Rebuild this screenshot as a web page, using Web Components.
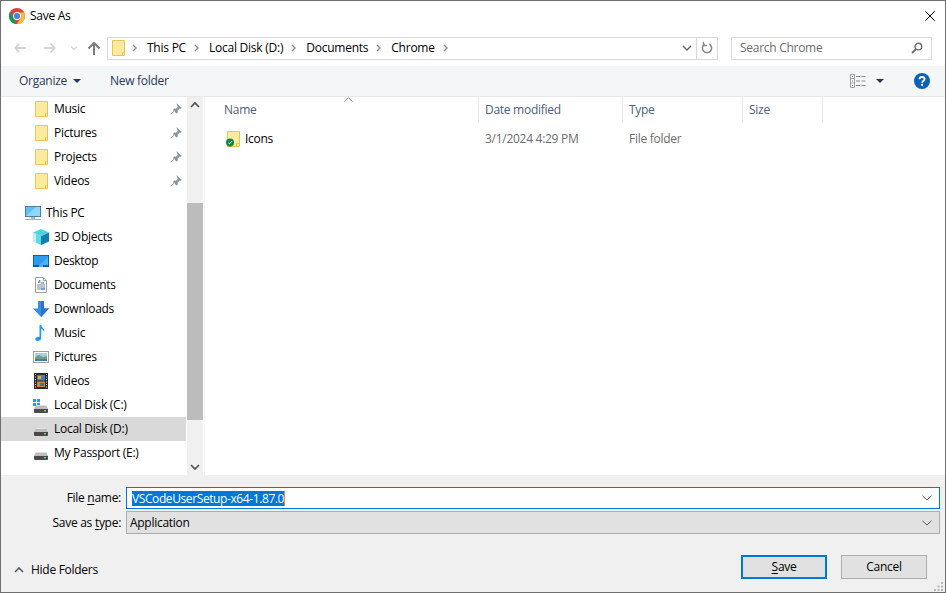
<!DOCTYPE html>
<html lang="en">
<head>
<meta charset="utf-8">
<title>Save As</title>
<style>
  html, body { margin: 0; padding: 0; background: #fff; }
  body { font: 12px/16px "Open Sans", "Noto Sans", sans-serif; letter-spacing: -0.28px; color: #000; overflow: hidden; }
</style>
</head>
<body>
<save-dialog></save-dialog>

<script>
"use strict";

const DISK = `<path d="M3 7h10l2 4H1z" fill="#bdbdbd"/><path d="M3 7h10l.5 1h-11z" fill="#e2e2e2"/><path d="M1 11h14v3.500l-1 .5H2l-1-.5z" fill="#4a4a4a"/><rect x="11" y="12" width="2" height="1.500" fill="#5fd35f"/>`;

const ICONS = {
  chrome: `<svg viewBox="0 0 16 16" width="16" height="16"><circle cx="8" cy="8" r="8" fill="#db4437"/><path d="M8 16A8 8 0 0 1 1 4l3.600 6.200L8 16z" fill="#0f9d58"/><path d="M16 8a8 8 0 0 1-8 8l3.800-6.500L8 4.500h7A8 8 0 0 1 16 8z" fill="#fbc02d"/><circle cx="8" cy="8" r="3.900" fill="#fff"/><circle cx="8" cy="8" r="3" fill="#3f82ee"/></svg>`,
  close: `<svg viewBox="0 0 10 10" width="10" height="10"><path d="M.3.3l9.400 9.400M9.700.3L.3 9.700" stroke="#000" stroke-width="1" fill="none"/></svg>`,
  back: `<svg viewBox="0 0 12 12" width="12" height="12"><path d="M5.500 1.500L1.200 6l4.300 4.500M1.500 6H12" stroke="#d4d4d4" stroke-width="1.800" fill="none"/></svg>`,
  forward: `<svg viewBox="0 0 12 12" width="12" height="12"><path d="M6.500 1.500L10.800 6l-4.300 4.500M10.500 6H0" stroke="#d4d4d4" stroke-width="1.800" fill="none"/></svg>`,
  recent: `<svg viewBox="0 0 8 6" width="8" height="6"><path d="M1 1.500l3 3 3-3" stroke="#d4d4d4" stroke-width="1.300" fill="none"/></svg>`,
  up: `<svg viewBox="0 0 14 14" width="14" height="14"><path d="M1.500 7.500L7 2l5.500 5.500M7 2.500V14" stroke="#7b7b7b" stroke-width="2" fill="none"/></svg>`,
  crumb: `<svg viewBox="0 0 6 8" width="6" height="8"><path d="M1 1l3 3-3 3" stroke="#8a8a8a" stroke-width="1.400" fill="none"/></svg>`,
  chevron: `<svg viewBox="0 0 10 6" width="10" height="6"><path d="M1 1l4 4 4-4" stroke="#6d6d6d" stroke-width="1.500" fill="none"/></svg>`,
  thin: `<svg viewBox="0 0 10 6" width="10" height="6"><path d="M.5.8L5 5l4.500-4.200" stroke="#5a5a5a" stroke-width="1" fill="none"/></svg>`,
  refresh: `<svg viewBox="0 0 12 14" width="12" height="14"><path d="M3.600 3.200A4.600 4.600 0 1 0 8.400 3.200" stroke="#8a8a8a" stroke-width="1.500" fill="none"/><path d="M2.400.8v3.800h3.800" stroke="#8a8a8a" stroke-width="1.300" fill="none"/></svg>`,
  search: `<svg viewBox="0 0 12 12" width="12" height="12"><circle cx="7.400" cy="4.600" r="3.300" stroke="#6d6d6d" stroke-width="1.400" fill="none"/><path d="M5 7L1 11" stroke="#6d6d6d" stroke-width="1.800"/></svg>`,
  caret: `<svg viewBox="0 0 8 4" width="8" height="4"><path d="M0 0h8L4 4z" fill="#1e395b"/></svg>`,
  views: `<svg viewBox="0 0 16 14" width="16" height="14"><path d="M.5.5h4v13h-4zM.5 4.500h4M.5 9h4" stroke="#a0a0a0" fill="#fff"/><path d="M6 2.500h4M11.500 2.500h4M6 7h4M11.500 7h4M6 11.500h4M11.500 11.500h4" stroke="#8c8c8c" fill="none"/><path d="M2 2.500h1M2 7h1M2 11.500h1" stroke="#777"/></svg>`,
  help: `<svg viewBox="0 0 16 16" width="16" height="16"><circle cx="8" cy="8" r="8" fill="#0a62b8"/><path d="M5.500 6.200C5.500 4.700 6.600 4 8 4s2.600.8 2.600 2.100c0 1.900-2.500 1.800-2.500 3.700" stroke="#fff" stroke-width="1.800" fill="none"/><rect x="7.100" y="10.800" width="2" height="2" fill="#fff"/></svg>`,
  pin: `<svg viewBox="0 0 12 12" width="12" height="12"><path d="M7 .8l4.200 4.200-1 .8-.7-.3-2 2 .1 1.800-.9.900L3.300 6.800l.9-.9 1.800.1 2-2-.3-.7zM4.300 7.700L.8 11.200" fill="#8d979f" stroke="#8d979f" stroke-width=".7"/></svg>`,
  sbUp: `<svg viewBox="0 0 10 6" width="10" height="6"><path d="M1 5l4-4 4 4" stroke="#505050" stroke-width="1.700" fill="none"/></svg>`,
  sbDown: `<svg viewBox="0 0 10 6" width="10" height="6"><path d="M1 1l4 4 4-4" stroke="#505050" stroke-width="1.700" fill="none"/></svg>`,
  hide: `<svg viewBox="0 0 10 6" width="10" height="6"><path d="M1 5l4-4 4 4" stroke="#555" stroke-width="1.500" fill="none"/></svg>`,
  sort: `<svg viewBox="0 0 9 5" width="9" height="5"><path d="M.5 4.500L4.500.7l4 3.800" stroke="#8a8a8a" fill="none"/></svg>`,
  grip: `<svg viewBox="0 0 10 9" width="10" height="9"><path d="M7 0h2v2H7zM3.500 3.500h2v2h-2zM7 3.500h2v2H7zM0 7h2v2H0zM3.500 7h2v2h-2zM7 7h2v2H7z" fill="#b8b8b8"/></svg>`,
  folder: `<svg viewBox="0 0 16 16" width="16" height="16"><path d="M2.500.5h12v15h-12z" fill="#fde99f" stroke="#e8c64f"/><path d="M12.500 15.500v-3h2" fill="none" stroke="#e8c64f"/></svg>`,
  sync: `<svg viewBox="0 0 16 16" width="16" height="16"><path d="M2.500.5h12v15h-12z" fill="#fde99f" stroke="#e8c64f"/><path d="M11.500 15.500v-3h3" fill="none" stroke="#e8c64f"/><circle cx="5" cy="11.500" r="4" fill="#14844a"/><path d="M3.300 11.700l1.300 1.200 2.100-2.600" stroke="#fff" stroke-width="1" fill="none"/></svg>`,
  pc: `<svg viewBox="0 0 16 16" width="16" height="16"><rect x=".5" y="1.500" width="15" height="10" fill="#5cc1f7" stroke="#4f7da3"/><path d="M1 11L11 2h4v9z" fill="#8fd6fb"/><path d="M6 12h4v2H6z" fill="#b0b8bf"/><path d="M0 14.500h16" stroke="#a9b1b8"/></svg>`,
  cube: `<svg viewBox="0 0 16 16" width="16" height="16"><path d="M8 0l8 3.500-8 3.700L0 3.500z" fill="#4fd3e0"/><path d="M0 3.500l8 3.700V16L0 12.500z" fill="#5fdbe8"/><path d="M0 3.500l3 1.400V14l-3-1.500z" fill="#c4f0f4"/><path d="M8 7.200l8-3.700v9L8 16z" fill="#0f7fb0"/></svg>`,
  desktop: `<svg viewBox="0 0 16 16" width="16" height="16"><rect x="0" y="2" width="16" height="12" fill="#0a5fb8"/><rect x="1" y="3" width="14" height="9" fill="#2d9cf0"/><path d="M7 12L15 4v8z" fill="#4fb2f5"/><rect x="6" y="12.500" width="4" height="1" fill="#cfe6fa"/></svg>`,
  documents: `<svg viewBox="0 0 16 16" width="16" height="16"><path d="M2.500.5h8l3 3v12h-11z" fill="#fff" stroke="#9aa0a6"/><path d="M10.500.5v3h3" fill="#e8e8e8" stroke="#9aa0a6"/><path d="M4 8h8M4 10h8M4 12h8" stroke="#7b8794"/><path d="M7 3l-1.500 3M5.500 5h2M8 6h3M8 12h4" stroke="#2a7fd0"/></svg>`,
  downloads: `<svg viewBox="0 0 16 16" width="16" height="16"><path d="M5 0h6v7.500h5L8 16 0 7.500h5z" fill="#3b8de0"/><path d="M8 0h3v7.500h5L8 16z" fill="#2a74c8"/></svg>`,
  music: `<svg viewBox="0 0 16 16" width="16" height="16"><path d="M6.500 0h1.700c.3 2.500 3.800 3.500 3 7-.6-2-2.200-3-3-3v9c0 1.700-1.700 3-3.700 3S2 15 2.500 13.500 5 11.200 6.500 12z" fill="#1a9cf0"/></svg>`,
  pictures: `<svg viewBox="0 0 16 16" width="16" height="16"><rect x=".5" y="2.500" width="15" height="11" fill="#fff" stroke="#a0a0a0"/><rect x="2" y="4" width="12" height="8" fill="#a9cfea"/><path d="M2 8l4-2 4 2 4-1v3H2z" fill="#6f9f8a"/><path d="M2 10h12v2H2z" fill="#3f7fb0"/></svg>`,
  videos: `<svg viewBox="0 0 16 16" width="16" height="16"><rect x="1" y="0" width="14" height="16" fill="#2b2b2b"/><rect x="4" y="2" width="8" height="5.500" fill="#3b7fd0"/><rect x="4" y="8.500" width="8" height="5.500" fill="#d08a2a"/><path d="M5 3h3v3H5z" fill="#e6b030"/><path d="M7 10h4v3H7z" fill="#3a6fc0"/><path d="M2 1.500h1M2 4h1M2 6.500h1M2 9h1M2 11.500h1M2 14h1M13 1.500h1M13 4h1M13 6.500h1M13 9h1M13 11.500h1M13 14h1" stroke="#ddd"/></svg>`,
  diskC: `<svg viewBox="0 0 16 16" width="16" height="16"><g transform="translate(0 1)">${DISK}</g><path d="M0 2h3v3H0zM4 2h3v3H4zM0 6h3v3H0zM4 6h3v2H4z" fill="#1ba1e2"/></svg>`,
  disk: `<svg viewBox="0 0 16 16" width="16" height="16">${DISK}</svg>`
};

class WinIcon extends HTMLElement {
  static get observedAttributes() {
    return ["name"];
  }
  constructor() {
    super();
    this.attachShadow({ mode: "open" });
  }
  attributeChangedCallback(attr, prev, name) {
    this.shadowRoot.innerHTML = `<style>:host{display:inline-flex;flex:none;line-height:0}</style>${ICONS[name] || ""}`;
  }
}

class TitleBar extends HTMLElement {
  constructor() {
    super();
    this.attachShadow({ mode: "open" }).innerHTML = `
      <style>
        :host { display: flex; align-items: center; height: 29px; padding: 0 10px 0 8px; gap: 5px; }
        .grow { flex: 1; }
      </style>
      <win-icon name="chrome"></win-icon>
      <slot></slot>
      <span class="grow"></span>
      <win-icon name="close"></win-icon>`;
  }
}

class NavBar extends HTMLElement {
  constructor() {
    super();
    const crumbs = ["This PC", "Local Disk (D:)", "Documents", "Chrome"];
    this.attachShadow({ mode: "open" }).innerHTML = `
      <style>
        :host { display: flex; align-items: center; height: 36px; padding: 0 13px 0 13px; }
        .btns { display: flex; align-items: center; width: 93px; }
        .box { flex: 1; height: 21px; border: 1px solid #d9d9d9; display: flex; align-items: center; margin-right: 13px; }
        .path { flex: 1; display: flex; align-items: center; padding-left: 2px; letter-spacing: -0.24px; }
        .path win-icon[name=crumb] { margin: 0 9px 0 8px; }
        .path win-icon[name=folder] { margin-right: -2px; }
        .drop { width: 26px; display: flex; align-items: center; justify-content: center; padding-left: 8px; box-sizing: border-box; }
        .refresh { width: 20px; height: 21px; border-left: 1px solid #d9d9d9; display: flex; align-items: center; justify-content: center; }
        .search { height: 21px; border: 1px solid #d9d9d9; display: flex; align-items: center; justify-content: space-between; padding: 0 8px; width: 183px; color: #6d6d6d; }
      </style>
      <div class="btns">
        <win-icon name="back"></win-icon>
        <win-icon name="forward" style="margin-left:18px"></win-icon>
        <win-icon name="recent" style="margin-left:14px"></win-icon>
        <win-icon name="up" style="margin-left:9px"></win-icon>
      </div>
      <div class="box">
        <div class="path">
          <win-icon name="folder"></win-icon>
          ${crumbs.map((c) => `<win-icon name="crumb"></win-icon><span>${c}</span>`).join("")}
          <win-icon name="crumb"></win-icon>
        </div>
        <div class="drop"><win-icon name="chevron"></win-icon></div>
        <div class="refresh"><win-icon name="refresh"></win-icon></div>
      </div>
      <div class="search"><span>Search Chrome</span><win-icon name="search"></win-icon></div>`;
  }
}

class ToolBar extends HTMLElement {
  constructor() {
    super();
    this.attachShadow({ mode: "open" }).innerHTML = `
      <style>
        :host { display: flex; align-items: center; height: 30px; background: #f5f6f7; border-bottom: 1px solid #e7e8ea; padding: 0 15px 0 18px; color: #1e395b; }
        .org { display: flex; align-items: center; gap: 6px; width: 91px; }
        .grow { flex: 1; }
        .views { display: flex; align-items: center; gap: 10px; margin-right: 30px; }
      </style>
      <div class="org"><span>Organize</span><win-icon name="caret"></win-icon></div>
      <span>New folder</span>
      <span class="grow"></span>
      <div class="views"><win-icon name="views"></win-icon><win-icon name="caret"></win-icon></div>
      <win-icon name="help"></win-icon>`;
  }
}

class NavItem extends HTMLElement {
  constructor() {
    super();
    this.attachShadow({ mode: "open" }).innerHTML = `
      <style>
        :host { display: flex; align-items: center; height: 24px; padding-left: 32px; padding-right: 2px; gap: 5px; margin-right: 1px; }
        :host([selected]) { background: #d9d9d9; }
        :host([root]) { padding-left: 24px; }
        .label { flex: 1; }
        win-icon[name=pin] { margin-right: 2px; }
      </style>
      <win-icon></win-icon>
      <span class="label"><slot></slot></span>`;
  }
  connectedCallback() {
    this.shadowRoot.querySelector("win-icon").setAttribute("name", this.getAttribute("icon"));
    if (this.hasAttribute("pinned") && !this.shadowRoot.querySelector("[name=pin]")) {
      const pin = document.createElement("win-icon");
      pin.setAttribute("name", "pin");
      this.shadowRoot.appendChild(pin);
    }
  }
}

class SideNav extends HTMLElement {
  constructor() {
    super();
    this.attachShadow({ mode: "open" }).innerHTML = `
      <style>
        :host { display: flex; width: 204px; flex: none; border-right: 1px solid #f0f0f0; box-sizing: border-box; }
        .items { width: 186px; flex: none; }
        .gap { height: 8px; }
        .bar { width: 16px; flex: none; background: #f0f0f0; display: flex; flex-direction: column; }
        .arrow { height: 16px; display: flex; align-items: center; justify-content: center; flex: none; }
        .track { flex: 1; }
        .pre { height: 90px; }
        .thumb { height: 217px; background: #bcbcbc; }
      </style>
      <div class="items">
        <slot name="quick"></slot>
        <div class="gap"></div>
        <slot></slot>
      </div>
      <div class="bar">
        <div class="arrow"><win-icon name="sbUp"></win-icon></div>
        <div class="track"><div class="pre"></div><div class="thumb"></div></div>
        <div class="arrow"><win-icon name="sbDown"></win-icon></div>
      </div>`;
  }
}

class FileList extends HTMLElement {
  constructor() {
    super();
    this.attachShadow({ mode: "open" }).innerHTML = `
      <style>
        :host { display: block; flex: 1; position: relative; padding-left: 19px; }
        .cols, .row { display: grid; grid-template-columns: 255px 144px 120px 80px; }
        .cols { height: 25px; color: #4c607a; }
        .cols > div { display: flex; align-items: center; padding-left: 6px; border-right: 1px solid #e5e5e5; }
        .row { height: 24px; margin-top: 5px; align-items: center; color: #6d6d6d; }
        .row > div { padding-left: 6px; }
        .name { display: flex; align-items: center; gap: 4px; padding-left: 1px !important; color: #000; }
        .cols > div:first-child { padding-left: 0; }
        .sort { position: absolute; left: 139px; top: 0; }
      </style>
      <win-icon class="sort" name="sort"></win-icon>
      <div class="cols"><div>Name</div><div>Date modified</div><div>Type</div><div>Size</div></div>
      <div class="row">
        <div class="name"><win-icon name="sync"></win-icon><span>Icons</span></div>
        <div>3/1/2024 4:29 PM</div>
        <div>File folder</div>
        <div></div>
      </div>`;
  }
}

class SaveForm extends HTMLElement {
  constructor() {
    super();
    this.attachShadow({ mode: "open" }).innerHTML = `
      <style>
        :host { display: block; background: #f0f0f0; height: 117px; box-sizing: border-box; padding: 12px 5px 0 0; position: relative; }
        .grid { display: grid; grid-template-columns: 125px 1fr; row-gap: 2px; }
        label { display: flex; align-items: center; justify-content: flex-end; padding-right: 5px; }
        u { text-underline-offset: 2px; }
        .field { display: flex; align-items: center; justify-content: space-between; height: 22px; box-sizing: border-box; padding: 0 7px 0 5px; }
        .name { background: #fff; border: 1px solid #0078d7; }
        .type { background: #e1e1e1; border: 1px solid #adadad; height: 23px; padding-left: 3px; }
        .sel { background: #0078d7; color: #fff; height: 15px; line-height: 15px; border-right: 1px solid #f08a24; letter-spacing: -0.4px; }
        .foot { display: flex; align-items: center; margin-top: 21px; padding: 0 13px; height: 24px; }
        .hide { display: flex; align-items: center; gap: 7px; margin-top: 6px; }
        .grow { flex: 1; }
        button { all: unset; box-sizing: border-box; width: 86px; height: 24px; text-align: center; background: #e1e1e1; border: 1px solid #adadad; font: inherit; letter-spacing: inherit; line-height: 22px; }
        .primary { border: 2px solid #0078d7; line-height: 20px; margin-right: 14px; }
        .grip { position: absolute; right: 1px; bottom: 1px; }
      </style>
      <div class="grid">
        <label><span>File <u>n</u>ame:</span></label>
        <div class="field name"><span class="sel">VSCodeUserSetup-x64-1.87.0</span><win-icon name="thin"></win-icon></div>
        <label><span>Save as <u>t</u>ype:</span></label>
        <div class="field type"><span>Application</span><win-icon name="thin"></win-icon></div>
      </div>
      <div class="foot">
        <div class="hide"><win-icon name="hide"></win-icon><span>Hide Folders</span></div>
        <span class="grow"></span>
        <button class="primary"><u>S</u>ave</button>
        <button>Cancel</button>
      </div>
      <win-icon class="grip" name="grip"></win-icon>`;
  }
}

class SaveDialog extends HTMLElement {
  constructor() {
    super();
    const quick = ["Music", "Pictures", "Projects", "Videos"];
    const places = [
      ["cube", "3D Objects"], ["desktop", "Desktop"], ["documents", "Documents"],
      ["downloads", "Downloads"], ["music", "Music"], ["pictures", "Pictures"],
      ["videos", "Videos"], ["diskC", "Local Disk (C:)"], ["disk", "Local Disk (D:)"],
      ["disk", "My Passport (E:)"]
    ];
    this.attachShadow({ mode: "open" }).innerHTML = `
      <style>
        :host { display: flex; flex-direction: column; width: 946px; height: 593px; box-sizing: border-box; border: 1px solid #6f6f6f; background: #fff; }
        .main { flex: 1; display: flex; min-height: 0; }
      </style>
      <title-bar>Save As</title-bar>
      <nav-bar></nav-bar>
      <tool-bar></tool-bar>
      <div class="main">
        <side-nav>
          ${quick.map((q) => `<nav-item slot="quick" icon="folder" pinned>${q}</nav-item>`).join("")}
          <nav-item icon="pc" root>This PC</nav-item>
          ${places.map(([icon, text]) => `<nav-item icon="${icon}"${text.includes("(D:)") ? " selected" : ""}>${text}</nav-item>`).join("")}
        </side-nav>
        <file-list></file-list>
      </div>
      <save-form></save-form>`;
  }
}

customElements.define("win-icon", WinIcon);
customElements.define("title-bar", TitleBar);
customElements.define("nav-bar", NavBar);
customElements.define("tool-bar", ToolBar);
customElements.define("nav-item", NavItem);
customElements.define("side-nav", SideNav);
customElements.define("file-list", FileList);
customElements.define("save-form", SaveForm);
customElements.define("save-dialog", SaveDialog);
</script>
</body>
</html>
